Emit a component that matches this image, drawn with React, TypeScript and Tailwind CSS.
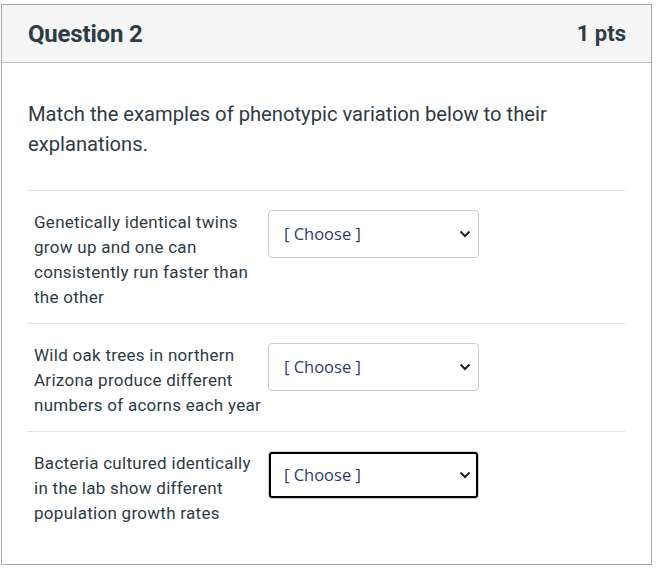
const rows = [
  { text: 'Genetically identical twins grow up and one can consistently run faster than the other', focused: false },
  { text: 'Wild oak trees in northern Arizona produce different numbers of acorns each year', focused: false },
  { text: 'Bacteria cultured identically in the lab show different population growth rates', focused: true },
];

const Chevron = () => (
  <svg width="12" height="8" viewBox="0 0 12 8" className="pointer-events-none absolute right-[8px] top-1/2 -translate-y-1/2">
    <path d="M1.5 1.5 L6 6 L10.5 1.5" fill="none" stroke="#222" strokeWidth="2" />
  </svg>
);

const ChooseSelect = ({ focused }: { focused: boolean }) => (
  <div className="relative w-[211px] h-[48px] shrink-0">
    <select
      defaultValue=""
      className={
        'appearance-none w-full h-full rounded-[4px] border border-[#c7cdd1] bg-white pl-[15px] pr-8 text-[16.5px] text-[#2d3b6b] font-["Open_Sans",sans-serif] ' +
        (focused ? 'outline-2 outline-black -outline-offset-[3px]' : 'outline-none')
      }
    >
      <option value="">[ Choose ]</option>
    </select>
    <Chevron />
  </div>
);

export default function App() {
  return (
    <div className="min-h-[577px] bg-white pt-[4px] pl-[1px] font-['Roboto',sans-serif] text-[#2d3b45]">
      <div className="w-[651px] h-[561px] border border-[#a8a8a8] flex flex-col">
        <div className="h-[58px] bg-[#f5f5f5] border-b border-[#c0c0c0] flex items-center justify-between pl-[26px] pr-[25px]">
          <h2 className="text-[24px] font-bold tracking-[-0.2px]">Question 2</h2>
          <span className="text-[22px] font-bold text-[#2d3b45]">1 pts</span>
        </div>
        <div className="px-[26px] pt-[36px]">
          <p className="text-[20.2px] leading-[30px]">
            Match the examples of phenotypic variation below to their explanations.
          </p>
          <div className="mt-[31px]">
            {rows.map((row, i) => (
              <div key={i} className="border-t border-[#dde1e3] flex pt-[19px] pb-[13px]">
                <div className="w-[240px] pl-[6px] pr-[3px] text-[17px] leading-[25px] tracking-[0.28px]">{row.text}</div>
                <ChooseSelect focused={row.focused} />
              </div>
            ))}
          </div>
        </div>
      </div>
    </div>
  );
}
